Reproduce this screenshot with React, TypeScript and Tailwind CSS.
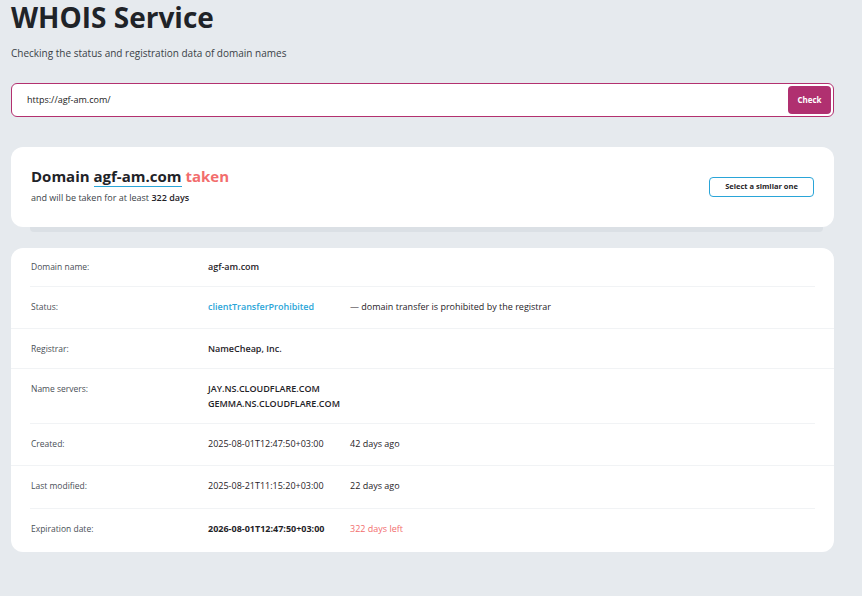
import React from 'react';

const Row: React.FC<{ label: string; divider: 'inset' | 'full' | 'none'; pad: string; children: React.ReactNode }> = ({ label, divider, pad, children }) => (
  <div>
    <div className={`flex px-[20px] leading-[16px] ${pad}`}>
      <div className="w-[177px] shrink-0 text-[8.5px] text-[#4a4f57]">{label}</div>
      <div className="flex-1 text-[9px] text-[#1f2328]">{children}</div>
    </div>
    {divider === 'inset' && <div className="mx-[19px] h-px bg-[#f1f3f5]" />}
    {divider === 'full' && <div className="h-px bg-[#f1f3f5]" />}
  </div>
);

export default function App() {
  return (
    <div className="min-h-[596px] bg-[#e6eaee] font-['Open_Sans',sans-serif] text-[#1f2328]">
      <div className="ml-[11px] w-[823px]">
        <h1 className="pt-[3px] text-[28px] leading-[28px] font-bold text-[#1f2328]">WHOIS Service</h1>
        <p className="mt-[15px] text-[10px] leading-[14px] text-[#3a3f47]">
          Checking the status and registration data of domain names
        </p>

        {/* search */}
        <div className="mt-[23px] flex h-[34px] items-center rounded-[6px] border border-[#b3306f] bg-white pl-[15px] pr-[2px]">
          <div className="flex-1 text-[9px] text-[#222]">https://agf-am.com/</div>
          <button className="h-[28px] w-[43px] rounded-[4px] bg-[#b03070] text-[8px] font-bold text-white">Check</button>
        </div>

        {/* verdict */}
        <div className="mt-[30px]">
          <div className="flex h-[80px] items-start justify-between rounded-[12px] bg-white px-[20px]">
            <div className="pt-[19px]">
              <div className="text-[15px] leading-[20px] font-bold text-[#1f2328]">
                Domain{' '}
                <span className="border-b-[1.5px] border-[#2aa5d8]">agf-am.com</span>{' '}
                <span className="text-[#f26d6d]">taken</span>
              </div>
              <div className="mt-[6px] text-[9px] leading-[12px] text-[#3a3f47]">
                and will be taken for at least <span className="font-semibold text-[#1f2328]">322 days</span>
              </div>
            </div>
            <button className="self-center h-[20px] w-[105px] rounded-[4px] border border-[#2aa5d8] bg-white text-[7.5px] font-bold text-[#1f2328]">
              Select a similar one
            </button>
          </div>
          <div className="ml-[19px] mr-[11px] h-[5px] rounded-b-[4px] bg-[#dbe0e5]" />
        </div>

        {/* details */}
        <div className="mt-[16px] rounded-[12px] bg-white">
          <Row label="Domain name:" divider="inset" pad="pt-[11px] pb-[11px]">
            <span className="font-semibold">agf-am.com</span>
          </Row>
          <Row label="Status:" divider="full" pad="pt-[12px] pb-[13px]">
            <div className="flex">
              <span className="w-[142px] font-semibold text-[#2aa5d8]">clientTransferProhibited</span>
              <span>— domain transfer is prohibited by the registrar</span>
            </div>
          </Row>
          <Row label="Registrar:" divider="full" pad="pt-[12px] pb-[11px]">
            <span className="font-semibold">NameCheap, Inc.</span>
          </Row>
          <div>
            <div className="flex px-[20px] pt-[12px] pb-[12px] leading-[15px]">
              <div className="w-[177px] shrink-0 text-[8.5px] text-[#4a4f57]">Name servers:</div>
              <div className="flex-1 text-[9px] font-semibold text-[#1f2328]">
                <div>JAY.NS.CLOUDFLARE.COM</div>
                <div>GEMMA.NS.CLOUDFLARE.COM</div>
              </div>
            </div>
            <div className="mx-[19px] h-px bg-[#f1f3f5]" />
          </div>
          <Row label="Created:" divider="full" pad="pt-[12px] pb-[13px]">
            <div className="flex">
              <span className="w-[142px]">2025-08-01T12:47:50+03:00</span>
              <span>42 days ago</span>
            </div>
          </Row>
          <Row label="Last modified:" divider="inset" pad="pt-[12px] pb-[14px]">
            <div className="flex">
              <span className="w-[142px]">2025-08-21T11:15:20+03:00</span>
              <span>22 days ago</span>
            </div>
          </Row>
          <Row label="Expiration date:" divider="none" pad="pt-[12px] pb-[15px]">
            <div className="flex">
              <span className="w-[142px] font-bold">2026-08-01T12:47:50+03:00</span>
              <span className="text-[#f26d6d]">322 days left</span>
            </div>
          </Row>
        </div>
      </div>
    </div>
  );
}
